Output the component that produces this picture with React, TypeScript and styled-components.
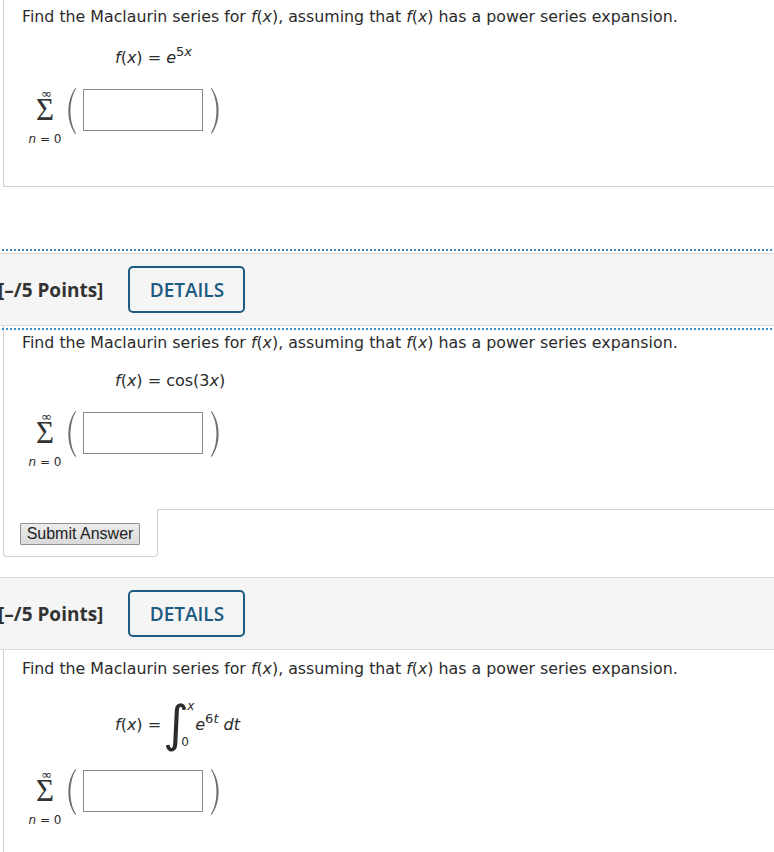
import React from "react";
import styled, { createGlobalStyle } from "styled-components";

const GlobalStyle = createGlobalStyle`
  html, body {
    margin: 0;
    padding: 0;
    background: #fff;
  }
  body {
    font-family: "DejaVu Sans", Verdana, sans-serif;
    color: #2b2b2b;
    overflow: hidden;
  }
`;

const Page = styled.div`
  width: 774px;
  height: 852px;
  overflow: hidden;
`;

const QuestionBox = styled.div<{ $top: number; $height?: number; $closed?: boolean }>`
  box-sizing: border-box;
  margin-left: 3px;
  padding: ${(p) => p.$top}px 0 0 18px;
  border-left: 1px solid #cfcfcf;
  ${(p) => p.$closed && "border-bottom: 1px solid #cfcfcf;"}
  ${(p) => p.$height && `height: ${p.$height}px;`}
`;

const Prompt = styled.p`
  margin: 0;
  font-size: 15.8px;
  line-height: 22px;
  white-space: nowrap;
`;

const Formula = styled.div<{ $gap: number }>`
  margin: ${(p) => p.$gap}px 0 0 93px;
  font-size: 16px;
  line-height: 22px;
  white-space: nowrap;
`;

const Sup = styled.sup`
  font-size: 13px;
  line-height: 0;
  vertical-align: 7px;
`;

const SumRow = styled.div<{ $gap: number }>`
  display: flex;
  align-items: flex-start;
  margin: ${(p) => p.$gap}px 0 0 5px;
`;

const SigmaColumn = styled.div`
  display: flex;
  flex-direction: column;
  align-items: center;
  width: 36px;
`;

const Inf = styled.span`
  display: block;
  font-size: 13px;
  line-height: 8px;
  margin: 3px 0 0 3px;
`;

const Sigma = styled.span`
  display: block;
  font-family: "Liberation Serif", "Times New Roman", serif;
  font-size: 31px;
  line-height: 30px;
  margin-top: -3px;
  color: #333;
`;

const Limit = styled.span`
  display: block;
  font-size: 12px;
  line-height: 14px;
  margin-top: 7px;
`;

const ParenSvg = styled.svg<{ $flip?: boolean }>`
  display: block;
  width: 12px;
  height: 48px;
  margin: 0 ${(p) => (p.$flip ? "0 0 7px" : "6px 0 2px")};
  ${(p) => p.$flip && "transform: scaleX(-1);"}
`;

const AnswerInput = styled.input`
  box-sizing: border-box;
  width: 120px;
  height: 42px;
  margin-top: 2px;
  border: 1px solid #8a8a8a;
  background: #fff;
`;

const PointsBar = styled.div<{ $focused?: boolean; $gap: number }>`
  display: flex;
  align-items: center;
  gap: 25px;
  margin: ${(p) => p.$gap}px -10px 0;
  padding: 12px 8px;
  background: #f5f5f5;
  border-top: 1px solid #dcdcdc;
  border-bottom: 1px solid #dcdcdc;
  ${(p) => p.$focused && "outline: 2px dotted #3b8dc8; outline-offset: 2px;"}
`;

const Points = styled.span`
  font-family: "Open Sans", sans-serif;
  font-size: 19px;
  font-weight: 700;
  color: #333;
`;

const DetailsButton = styled.button`
  box-sizing: border-box;
  width: 117px;
  height: 47px;
  padding: 0;
  border: 2px solid #1d5b82;
  border-radius: 5px;
  background: transparent;
  font-family: "Open Sans", sans-serif;
  font-size: 19px;
  font-weight: 600;
  color: #1d5b82;
`;

const SubmitRow = styled.div`
  display: flex;
  align-items: flex-start;
`;

const SubmitTab = styled.div`
  width: 137px;
  margin-left: 3px;
  padding: 14px 0 11px 16px;
  border: 1px solid #cfcfcf;
  border-top: none;
  border-radius: 0 0 4px 4px;
`;

const SubmitFiller = styled.div`
  flex: 1;
  border-top: 1px solid #cfcfcf;
`;

const SubmitButton = styled.button`
  box-sizing: border-box;
  display: block;
  width: 120px;
  height: 22px;
  padding: 0;
  border: 1px solid #8f8f8f;
  border-radius: 1px;
  background: linear-gradient(#ececec, #dadada);
  font-family: "Liberation Sans", Arial, sans-serif;
  font-size: 16px;
  color: #222;
`;

const IntegralFormula = styled.div`
  display: flex;
  align-items: center;
  height: 50px;
  margin: 19px 0 0 93px;
  font-size: 16px;
  white-space: nowrap;
`;

const IntegralGroup = styled.div`
  display: flex;
  align-items: stretch;
  margin: 0 1px 0 2px;
`;

const IntegralSign = styled.span`
  font-size: 50px;
  line-height: 50px;
`;

const Limits = styled.div`
  display: flex;
  flex-direction: column;
  justify-content: space-between;
  font-size: 12px;
  line-height: 14px;
`;

const UpperLimit = styled.i`
  margin-left: -2px;
`;

const LowerLimit = styled.span`
  margin-left: -8px;
`;

const Paren = ({ flip }: { flip?: boolean }) => (
  <ParenSvg $flip={flip} viewBox="0 0 12 48">
    <path d="M10.5 1 C1 13 1 35 10.5 47 L11.2 46.4 C3.6 35 3.6 13 11.2 1.6 Z" fill="#6e6e6e" />
  </ParenSvg>
);

const SeriesAnswer = ({ gap }: { gap: number }) => (
  <SumRow $gap={gap}>
    <SigmaColumn>
      <Inf>∞</Inf>
      <Sigma>Σ</Sigma>
      <Limit>
        <i>n</i> = 0
      </Limit>
    </SigmaColumn>
    <Paren />
    <AnswerInput type="text" />
    <Paren flip />
  </SumRow>
);

const PromptText = () => (
  <Prompt>
    Find the Maclaurin series for <i>f</i>(<i>x</i>), assuming that <i>f</i>(<i>x</i>) has a power series
    expansion.
  </Prompt>
);

const Header = ({ focused, gap }: { focused?: boolean; gap: number }) => (
  <PointsBar $focused={focused} $gap={gap}>
    <Points>[–/5 Points]</Points>
    <DetailsButton>DETAILS</DetailsButton>
  </PointsBar>
);

export default function App() {
  return (
    <Page>
      <GlobalStyle />
      <QuestionBox $top={6} $height={187} $closed>
        <PromptText />
        <Formula $gap={19}>
          <i>f</i>(<i>x</i>) = <i>e</i>
          <Sup>
            5<i>x</i>
          </Sup>
        </Formula>
        <SeriesAnswer gap={18} />
      </QuestionBox>

      <Header focused gap={66} />
      <QuestionBox $top={6} $height={183}>
        <PromptText />
        <Formula $gap={16}>
          <i>f</i>(<i>x</i>) = cos(3<i>x</i>)
        </Formula>
        <SeriesAnswer gap={18} />
      </QuestionBox>
      <SubmitRow>
        <SubmitTab>
          <SubmitButton>Submit Answer</SubmitButton>
        </SubmitTab>
        <SubmitFiller />
      </SubmitRow>

      <Header gap={20} />
      <QuestionBox $top={8} $height={300}>
        <PromptText />
        <IntegralFormula>
          <span>
            <i>f</i>(<i>x</i>) =
          </span>
          <IntegralGroup>
            <IntegralSign>∫</IntegralSign>
            <Limits>
              <UpperLimit>x</UpperLimit>
              <LowerLimit>0</LowerLimit>
            </Limits>
          </IntegralGroup>
          <span>
            <i>e</i>
            <Sup>
              6<i>t</i>
            </Sup>{" "}
            <i>dt</i>
          </span>
        </IntegralFormula>
        <SeriesAnswer gap={19} />
      </QuestionBox>
    </Page>
  );
}
